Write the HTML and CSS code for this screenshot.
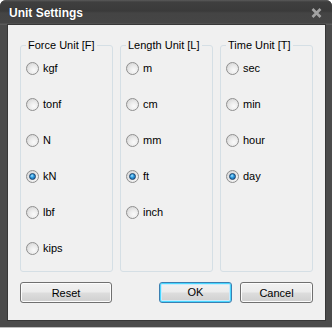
FILE: index.html
```html
<!DOCTYPE html>
<html>
<head>
<meta charset="utf-8">
<link rel="stylesheet" href="styles.css">
</head>
<body>
<div class="window">
  <div class="titlebar">
    <span class="title">Unit Settings</span>
    <svg class="close" width="11" height="10" viewBox="0 0 11 10"><path d="M1.5 1 L9.5 9 M9.5 1 L1.5 9" stroke="#a3a3a3" stroke-width="2.6" stroke-linecap="butt"/></svg>
  </div>
  <div class="client">
    <div class="groups">
      <fieldset class="group">
        <legend>Force Unit [F]</legend>
        <div class="opts">
          <div class="opt"><span class="radio"></span><span>kgf</span></div>
          <div class="opt"><span class="radio"></span><span>tonf</span></div>
          <div class="opt"><span class="radio"></span><span>N</span></div>
          <div class="opt"><span class="radio checked"><span class="dot"></span></span><span>kN</span></div>
          <div class="opt"><span class="radio"></span><span>lbf</span></div>
          <div class="opt"><span class="radio"></span><span>kips</span></div>
        </div>
      </fieldset>
      <fieldset class="group">
        <legend>Length Unit [L]</legend>
        <div class="opts">
          <div class="opt"><span class="radio"></span><span>m</span></div>
          <div class="opt"><span class="radio"></span><span>cm</span></div>
          <div class="opt"><span class="radio"></span><span>mm</span></div>
          <div class="opt"><span class="radio checked"><span class="dot"></span></span><span>ft</span></div>
          <div class="opt"><span class="radio"></span><span>inch</span></div>
        </div>
      </fieldset>
      <fieldset class="group">
        <legend>Time Unit [T]</legend>
        <div class="opts">
          <div class="opt"><span class="radio"></span><span>sec</span></div>
          <div class="opt"><span class="radio"></span><span>min</span></div>
          <div class="opt"><span class="radio"></span><span>hour</span></div>
          <div class="opt"><span class="radio checked"><span class="dot"></span></span><span>day</span></div>
        </div>
      </fieldset>
    </div>
    <div class="buttons">
      <button class="btn reset">Reset</button>
      <span class="spacer"></span>
      <button class="btn ok">OK</button>
      <button class="btn cancel">Cancel</button>
    </div>
  </div>
</div>
</body>
</html>
```

FILE: styles.css
```css
html, body {
  margin: 0;
  padding: 0;
  background: #ffffff;
}
.window {
  width: 332px;
  height: 328px;
  box-sizing: border-box;
  background: #4b4b4b;
  border-radius: 6px 6px 0 0;
  display: flex;
  flex-direction: column;
  font-family: "Liberation Sans", Arial, sans-serif;
  font-size: 11px;
  color: #000;
  border-bottom: 1px solid #bdbdbd;
}
.titlebar {
  height: 25px;
  flex: none;
  box-sizing: border-box;
  display: flex;
  align-items: center;
  justify-content: space-between;
  padding: 0 9px 0 9px;
  border-radius: 6px 6px 0 0;
  background: linear-gradient(#5a5a5a 0px, #3f3f3f 2px, #3a3a3a 11px, #444444 13px, #454545 23px, #5a5a5a 24px);
}
.title {
  color: #ffffff;
  font-weight: bold;
  font-size: 12px;
  text-shadow: 0 0 1px rgba(0,0,0,0.6);
  margin-top: 1px;
}
.close {
  display: block;
  margin-top: 0px;
  margin-right: 1px;
}
.client {
  flex: 1;
  margin: 0 7px 7px 8px;
  background: #f0f0f0;
  box-shadow: 0 0 0 1px #373737;
  padding: 13px 12px 0 12px;
  display: flex;
  flex-direction: column;
}
.groups {
  display: flex;
  gap: 7px;
}
.group {
  width: 93px;
  height: 234px;
  box-sizing: border-box;
  margin: 0;
  padding: 0 0 0 5px;
  border: 1px solid #d5dfe5;
  border-radius: 3px;
  min-width: 0;
}
.group legend {
  margin-left: 0px;
  padding: 0 2px;
  line-height: 14px;
}
.opts {
  display: flex;
  flex-direction: column;
  margin-top: -2px;
}
.opt {
  height: 36px;
  display: flex;
  align-items: center;
  gap: 4px;
}
.radio {
  width: 13px;
  height: 13px;
  box-sizing: border-box;
  border-radius: 50%;
  border: 1px solid #8f8f8f;
  background: radial-gradient(circle at 62% 66%, #fafafa 0%, #ececec 40%, #cdcdcd 100%);
  display: flex;
  align-items: center;
  justify-content: center;
  flex: none;
}
.dot {
  width: 7px;
  height: 7px;
  box-sizing: border-box;
  border-radius: 50%;
  border: 1px solid #17406a;
  background: radial-gradient(circle at 40% 35%, #b6ecff 0%, #38a3e6 35%, #0b5697 100%);
}
.buttons {
  display: flex;
  margin-top: 10px;
  gap: 8px;
}
.spacer {
  flex: 1;
}
.btn {
  height: 21px;
  box-sizing: border-box;
  padding: 0;
  font-family: "Liberation Sans", Arial, sans-serif;
  font-size: 11px;
  color: #000;
  border: 1px solid #707070;
  border-radius: 3px;
  background: linear-gradient(#f2f2f2 0%, #ebebeb 48%, #dddddd 52%, #cfcfcf 100%);
  box-shadow: inset 0 0 0 1px #fcfcfc;
}
.reset {
  width: 92px;
}
.ok {
  width: 73px;
  border-color: #3c7fb1;
  box-shadow: inset 0 0 0 1px #48d7ff, inset 0 0 0 2px #c9eafc;
  background: linear-gradient(#eaf6fd 0%, #d9f0fc 48%, #bee6fd 52%, #a7d9f5 100%);
  background: linear-gradient(#f2f2f2 0%, #ebebeb 48%, #dddddd 52%, #cfcfcf 100%);
  padding-bottom: 2px;
}
.cancel {
  width: 73px;
}
```
